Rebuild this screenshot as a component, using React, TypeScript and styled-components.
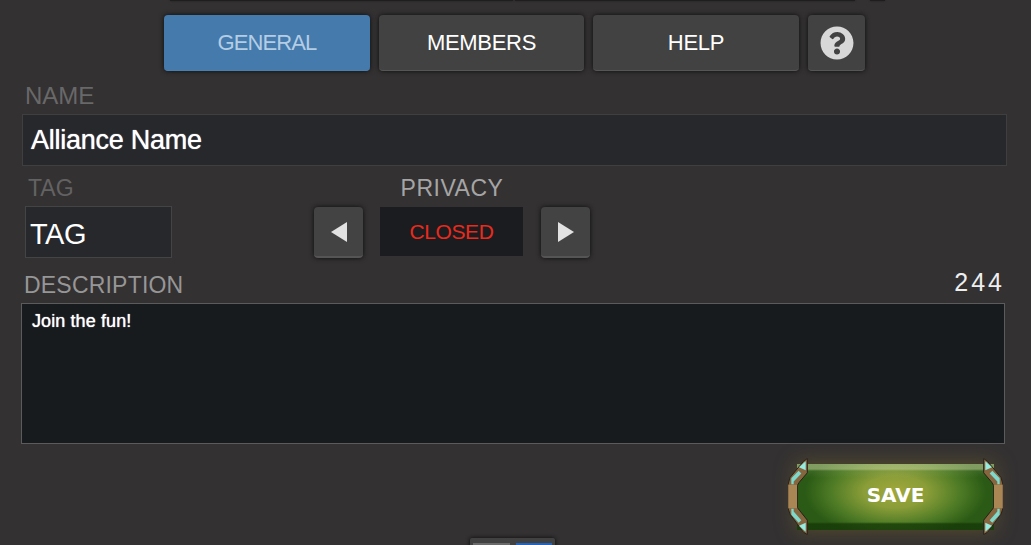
import styled, { createGlobalStyle } from "styled-components";
import { FaQuestionCircle } from "react-icons/fa";

const GlobalStyle = createGlobalStyle`
  html, body {
    margin: 0;
    padding: 0;
    background: #333132;
  }
  body {
    font-family: "Liberation Sans", Arial, sans-serif;
  }
`;

const Page = styled.div`
  width: 1031px;
  height: 545px;
  overflow: hidden;
  display: flex;
  flex-direction: column;
  background: #333132;
`;

const TopEdge = styled.div`
  display: flex;
  height: 1px;
  margin-bottom: 14px;
  padding-left: 170px;
`;

const TopSegment = styled.div<{ $width: number; $gap?: number }>`
  width: ${(p) => p.$width}px;
  margin-right: ${(p) => p.$gap ?? 0}px;
  background: #1f1e1f;
  box-shadow: 0 0 2px #1a1a1a;
`;

const Tabs = styled.div`
  display: flex;
  gap: 9px;
  padding-left: 164px;
`;

const Tab = styled.div<{ $active?: boolean; $width: number }>`
  width: ${(p) => p.$width}px;
  height: 56px;
  box-sizing: border-box;
  display: flex;
  align-items: center;
  justify-content: center;
  border-radius: 4px;
  font-size: 22px;
  letter-spacing: ${(p) => (p.$active ? "-0.9px" : "-0.3px")};
  color: ${(p) => (p.$active ? "#b4cde4" : "#ffffff")};
  background: ${(p) => (p.$active ? "#457aad" : "#424242")};
  border-bottom: 1px solid ${(p) => (p.$active ? "#4b7fb0" : "#565656")};
  box-shadow: 0 0 5px #0e0e0e;
`;

const Form = styled.div`
  display: flex;
  flex-direction: column;
  padding: 0 24px 0 22px;
`;

const NameLabel = styled.div`
  height: 28px;
  line-height: 30px;
  margin: 10px 0 5px 3px;
  font-size: 24px;
  color: #696869;
`;

const NameInput = styled.div`
  height: 52px;
  box-sizing: border-box;
  display: flex;
  align-items: center;
  padding-left: 8px;
  background: #26282b;
  border: 1px solid #3f3f3f;
  font-size: 27px;
  letter-spacing: -0.25px;
  color: #ffffff;
  text-shadow: 0 0 1px #ffffff;
`;

const MiddleRow = styled.div`
  display: flex;
  margin: 10px 0 0 3px;
`;

const TagColumn = styled.div`
  width: 147px;
  display: flex;
  flex-direction: column;
`;

const TagLabel = styled.div`
  height: 24px;
  line-height: 24px;
  margin: 0 0 6px 3px;
  font-size: 23px;
  color: #636263;
`;

const TagInput = styled.div`
  height: 52px;
  box-sizing: border-box;
  display: flex;
  align-items: center;
  padding: 5px 0 0 4px;
  background: #26282b;
  border: 1px solid #444444;
  font-size: 29px;
  letter-spacing: -0.5px;
  color: #ffffff;
`;

const PrivacyColumn = styled.div`
  width: 276px;
  margin-left: 142px;
  display: flex;
  flex-direction: column;
`;

const PrivacyLabel = styled.div`
  height: 24px;
  line-height: 24px;
  margin-bottom: 7px;
  text-align: center;
  font-size: 23px;
  letter-spacing: 0.5px;
  color: #a6a5a6;
`;

const PrivacyControls = styled.div`
  display: flex;
  align-items: flex-start;
`;

const ArrowButton = styled.div`
  width: 49px;
  height: 51px;
  box-sizing: border-box;
  display: flex;
  align-items: center;
  justify-content: center;
  border-radius: 4px;
  background: #434343;
  border-bottom: 2px solid #555555;
  box-shadow: 0 0 5px #0e0e0e;
`;

const ArrowIcon = styled.svg<{ $flip?: boolean }>`
  width: 16px;
  height: 20px;
  fill: #e2e2e2;
  transform: ${(p) => (p.$flip ? "scaleX(-1)" : "none")};
`;

const PrivacyValue = styled.div`
  width: 143px;
  height: 49px;
  margin: 0 18px 0 17px;
  display: flex;
  align-items: center;
  justify-content: center;
  box-sizing: border-box;
  background: #1a1c1f;
  font-size: 21px;
  letter-spacing: -0.4px;
  color: #ea2a1d;
`;

const DescriptionHeader = styled.div`
  display: flex;
  justify-content: space-between;
  align-items: center;
  height: 24px;
  margin: 14px 2px 7px 2px;
`;

const DescriptionLabel = styled.div`
  padding-top: 2px;
  font-size: 23px;
  letter-spacing: 0.2px;
  color: #979697;
`;

const Counter = styled.div`
  padding-bottom: 3px;
  font-size: 25px;
  letter-spacing: 3px;
  color: #eeeeee;
`;

const DescriptionInput = styled.div`
  width: 984px;
  margin-left: -1px;
  height: 141px;
  box-sizing: border-box;
  padding: 6px 10px;
  background: #171b1e;
  border: 1px solid #5b5b5b;
  font-size: 18px;
  line-height: 22px;
  letter-spacing: 0.1px;
  color: #ffffff;
  text-shadow: 0 0 1px #ffffff;
`;

const SaveRow = styled.div`
  display: flex;
  justify-content: flex-end;
  margin-top: 14px;
  padding-right: 28px;
`;

const SaveWrap = styled.div`
  position: relative;
  width: 215px;
  height: 77px;
  display: flex;
  align-items: center;
  justify-content: center;
`;

const SaveButton = styled.div`
  width: 197px;
  height: 66px;
  box-sizing: border-box;
  display: flex;
  align-items: center;
  justify-content: center;
  padding-bottom: 4px;
  font-family: "DejaVu Sans", sans-serif;
  font-weight: 700;
  font-size: 20px;
  color: #ffffff;
  background:
    linear-gradient(rgba(214, 222, 170, 0.5) 0 5px, rgba(214, 222, 170, 0.1) 7px, transparent 14px),
    linear-gradient(transparent 58px, rgba(20, 54, 6, 0.75) 60px),
    radial-gradient(ellipse 46% 70% at 50% 42%, #a1a83b 0%, #8a9d38 35%, #4d7a25 72%, #2a5a15 100%);
  box-shadow: 0 0 20px 1px rgba(140, 116, 36, 0.42);
`;

const Bracket = styled.svg<{ $right?: boolean }>`
  position: absolute;
  top: 0;
  ${(p) => (p.$right ? "right: 0;" : "left: 0;")}
  width: 20px;
  height: 77px;
  transform: ${(p) => (p.$right ? "scaleX(-1)" : "none")};
`;

const BottomStub = styled.div`
  display: flex;
  flex-shrink: 0;
  gap: 6px;
  width: 85px;
  height: 12px;
  box-sizing: border-box;
  margin: auto 0 -5px 470px;
  padding: 5px 3px 0;
  background: #414141;
  border-radius: 2px;
  box-shadow: 0 0 4px #0a0a0a;
`;

const StubPart = styled.div<{ $color: string }>`
  flex: 1;
  background: ${(p) => p.$color};
`;

const SaveBracket = ({ right }: { right?: boolean }) => (
  <Bracket $right={right} viewBox="0 0 60 230">
    <polygon
      points="58,1 58,44 34,72 28,82 28,148 34,156 58,186 58,229 46,222 6,168 0,150 0,80 6,58 46,10"
      fill="#86663f"
      stroke="#26221e"
      strokeWidth="3"
    />
    <polygon points="1,80 27,80 27,150 1,150" fill="#ab8655" />
    <polygon points="53,9 53,36 33,27" fill="#95ece0" />
    <polygon points="53,194 53,221 33,203" fill="#95ece0" />
    <polygon points="10,60 32,38 40,46 17,70 17,78 10,78" fill="#7fd8cc" />
    <polygon points="10,152 17,152 17,160 40,186 32,194 10,170" fill="#7fd8cc" />
  </Bracket>
);

const App = () => {
  return (
    <Page>
      <GlobalStyle />
      <TopEdge>
        <TopSegment $width={343} $gap={2} />
        <TopSegment $width={340} $gap={15} />
        <TopSegment $width={15} />
      </TopEdge>
      <Tabs>
        <Tab $active $width={206}>GENERAL</Tab>
        <Tab $width={205}>MEMBERS</Tab>
        <Tab $width={206}>HELP</Tab>
        <Tab $width={57}>
          <FaQuestionCircle size={34} color="#d8d8d8" />
        </Tab>
      </Tabs>
      <Form>
        <NameLabel>NAME</NameLabel>
        <NameInput>Alliance Name</NameInput>
        <MiddleRow>
          <TagColumn>
            <TagLabel>TAG</TagLabel>
            <TagInput>TAG</TagInput>
          </TagColumn>
          <PrivacyColumn>
            <PrivacyLabel>PRIVACY</PrivacyLabel>
            <PrivacyControls>
              <ArrowButton>
                <ArrowIcon viewBox="0 0 16 20">
                  <polygon points="16,0 16,20 0,10" />
                </ArrowIcon>
              </ArrowButton>
              <PrivacyValue>CLOSED</PrivacyValue>
              <ArrowButton>
                <ArrowIcon $flip viewBox="0 0 16 20">
                  <polygon points="16,0 16,20 0,10" />
                </ArrowIcon>
              </ArrowButton>
            </PrivacyControls>
          </PrivacyColumn>
        </MiddleRow>
        <DescriptionHeader>
          <DescriptionLabel>DESCRIPTION</DescriptionLabel>
          <Counter>244</Counter>
        </DescriptionHeader>
        <DescriptionInput>Join the fun!</DescriptionInput>
      </Form>
      <SaveRow>
        <SaveWrap>
          <SaveButton>SAVE</SaveButton>
          <SaveBracket />
          <SaveBracket right />
        </SaveWrap>
      </SaveRow>
      <BottomStub>
        <StubPart $color="#6a6a6a" />
        <StubPart $color="#2563b8" />
      </BottomStub>
    </Page>
  );
};

export default App;
